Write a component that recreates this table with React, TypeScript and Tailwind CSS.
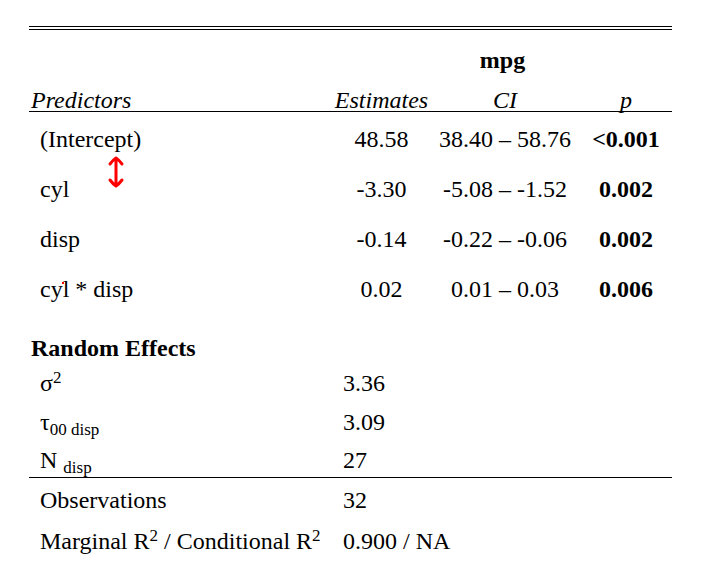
import React from "react";

const rows = [
  { term: "(Intercept)", est: "48.58", ci: "38.40 – 58.76", p: "<0.001" },
  { term: "cyl", est: "-3.30", ci: "-5.08 – -1.52", p: "0.002" },
  { term: "disp", est: "-0.14", ci: "-0.22 – -0.06", p: "0.002" },
  { term: "cyl * disp", est: "0.02", ci: "0.01 – 0.03", p: "0.006" },
];

const grid = "grid grid-cols-[304px_97px_150px_92px]";

function RandomRow({ label, value, h }: { label: React.ReactNode; value: string; h: string }) {
  return (
    <div className={`${grid} ${h} items-center pt-[2px]`}>
      <div className="pl-[11px]">{label}</div>
      <div className="col-span-3 pl-[10px]">{value}</div>
    </div>
  );
}

function RedArrow() {
  return (
    <svg width="22" height="34" viewBox="0 0 22 34" className="absolute left-[105px] top-[155px]">
      <path
        d="M11 4 L11 30 M5 9 Q8 5 11 3 Q14 5 17 9 M5 25 Q8 29 11 31 Q14 29 17 25"
        stroke="#ff0000"
        strokeWidth="3"
        fill="none"
        strokeLinecap="round"
        strokeLinejoin="round"
      />
    </svg>
  );
}

export default function App() {
  return (
    <div className="relative w-[723px] h-[576px] bg-white text-black font-[family-name:'Liberation_Serif','Times_New_Roman',serif] text-[24px] leading-none pt-[26px] pl-[29px]">
      <div className="w-[643px]">
        {/* double top rule */}
        <div className="h-px bg-black" />
        <div className="h-[2px]" />
        <div className="h-px bg-black" />

        {/* model title */}
        <div className={`${grid} h-[58px] items-center pt-[2px]`}>
          <div />
          <div className="col-span-3 text-center font-bold">mpg</div>
        </div>

        {/* column header */}
        <div className={`${grid} h-[24px] items-center italic border-b border-black`}>
          <div className="pl-[2px]">Predictors</div>
          <div className="text-center">Estimates</div>
          <div className="text-center">CI</div>
          <div className="text-center">p</div>
        </div>

        {rows.map((r) => (
          <div key={r.term} className={`${grid} h-[50px] items-center pt-[4px]`}>
            <div className="pl-[11px]">{r.term}</div>
            <div className="text-center">{r.est}</div>
            <div className="text-center">{r.ci}</div>
            <div className="text-center font-bold">{r.p}</div>
          </div>
        ))}

        <div className="h-[17px]" />
        <div className="h-[34px] flex items-center pl-[2px] pt-[4px] font-bold">Random Effects</div>

        <RandomRow
          h="h-[38px]"
          label={
            <span>
              σ<sup className="text-[17px]">2</sup>
            </span>
          }
          value="3.36"
        />
        <RandomRow
          h="h-[39px]"
          label={
            <span>
              τ<sub className="text-[17px] align-[-1px]">00 disp</sub>
            </span>
          }
          value="3.09"
        />
        <div className="border-b border-black">
          <RandomRow
            h="h-[37px]"
            label={
              <span>
                N <sub className="text-[17px] align-[-1px]">disp</sub>
              </span>
            }
            value="27"
          />
        </div>
        <RandomRow h="h-[42px]" label="Observations" value="32" />
        <RandomRow
          h="h-[40px]"
          label={
            <span>
              Marginal R<sup className="text-[17px]">2</sup> / Conditional R<sup className="text-[17px]">2</sup>
            </span>
          }
          value="0.900 / NA"
        />
      </div>

      <RedArrow />
      <div className="absolute left-[62px] top-[282px] w-[2px] h-[2px] bg-[#ff0000]" />
    </div>
  );
}
